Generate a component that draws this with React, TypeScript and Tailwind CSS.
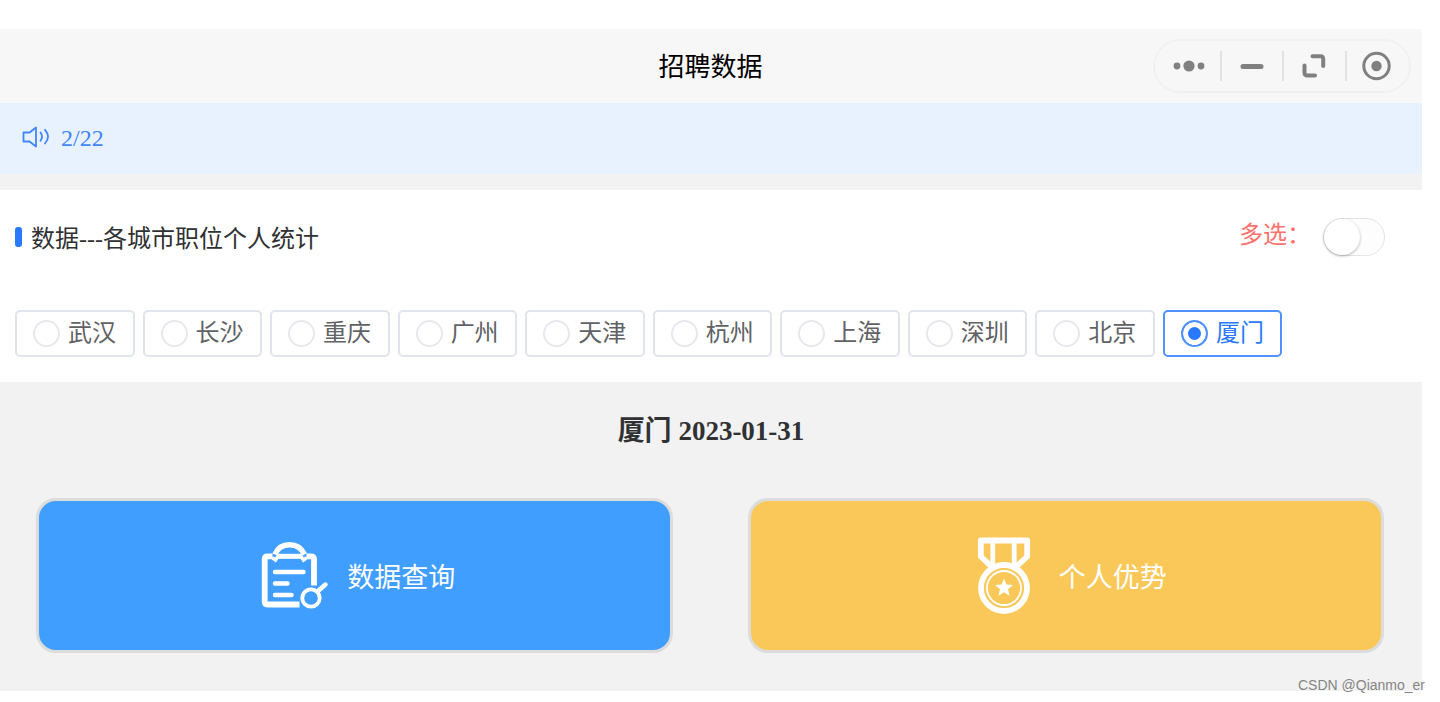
import { useState } from "react";

const cities = ["武汉", "长沙", "重庆", "广州", "天津", "杭州", "上海", "深圳", "北京", "厦门"];

function CapsuleMenu() {
  const button = "flex h-[30px] flex-1 items-center justify-center border-[#e2e2e2]";
  return (
    <div className="flex h-[54px] w-[258px] items-center rounded-full border-2 border-[#f1f1f1] pr-0.5 pl-1 text-[#808080]">
      <button type="button" aria-label="更多" className={button}>
        <svg width="32" height="12" viewBox="0 0 32 12" fill="currentColor">
          <circle cx="4" cy="6" r="3.4" />
          <circle cx="16" cy="6" r="5.6" />
          <circle cx="28" cy="6" r="3.4" />
        </svg>
      </button>
      <button type="button" aria-label="最小化" className={button + " border-l-2"}>
        <svg width="24" height="6" viewBox="0 0 24 6">
          <path d="M3 3.5H21" stroke="currentColor" strokeWidth="5" strokeLinecap="round" />
        </svg>
      </button>
      <button type="button" aria-label="全屏" className={button + " border-l-2"}>
        <svg width="24" height="24" viewBox="0 0 24 24" fill="none" stroke="currentColor" strokeWidth="4" strokeLinecap="round">
          <path d="M10.500 2.200H18.500Q21.200 2.200 21.200 5V12" />
          <path d="M2.500 11.500V18.800Q2.500 21.500 5.500 21.500H13" />
        </svg>
      </button>
      <button type="button" aria-label="关闭" className={button + " border-l-2"}>
        <svg width="30" height="30" viewBox="0 0 30 30">
          <circle cx="14.500" cy="15" r="12.700" fill="none" stroke="currentColor" strokeWidth="3" />
          <circle cx="14.500" cy="15" r="5.200" fill="currentColor" />
        </svg>
      </button>
    </div>
  );
}

function SpeakerIcon() {
  return (
    <svg width="28" height="22" viewBox="0 0 28 22" fill="none" stroke="currentColor" strokeWidth="1.800" strokeLinecap="round" strokeLinejoin="round">
      <path d="M14 1.500V20.500L7.500 15.500H1.500V6.500H7.500Z" />
      <path d="M18.500 6.500Q21.500 10.500 18.500 14.800" />
      <path d="M23 3.800Q29 10.500 23 17.500" />
    </svg>
  );
}

function ClipboardIcon() {
  return (
    <svg width="80" height="80" viewBox="0 0 80 80" fill="none" stroke="#fff" strokeLinecap="round">
      <path d="M19.500 20.300H14.500Q11.700 20.300 11.700 23V66Q11.700 68.500 14.500 68.500H46.500" strokeWidth="5.800" strokeLinecap="butt" />
      <path d="M53.500 20.300H58Q61 20.300 61 23V49.500" strokeWidth="5.800" strokeLinecap="butt" />
      <path d="M25 20.300H48" strokeWidth="5" strokeLinecap="butt" />
      <path d="M21.800 18.500C24.500 12 30 8.700 36.500 8.700S48.500 12 51.500 18.500" strokeWidth="5.400" strokeLinecap="butt" />
      <path d="M20.500 22.500L22.500 24L25 20.500M52.500 22.500L50.500 24L48 20.500" strokeWidth="3.600" />
      <path d="M22 36H50.500M22 47.500H34.500M22 59H38.500" strokeWidth="4.400" />
      <circle cx="58" cy="62" r="8.700" strokeWidth="3.800" />
      <path d="M64.500 55.500L72.500 48.500" strokeWidth="4.400" />
    </svg>
  );
}

function MedalIcon() {
  return (
    <svg width="80" height="80" viewBox="0 0 80 80" fill="none" stroke="#fff">
      <path d="M26 30L15.800 20.500V4.500H62.200V20.500L52 30" strokeWidth="5.800" strokeLinejoin="round" />
      <path d="M27.800 5V29M49.200 5V29" strokeWidth="4.800" />
      <circle cx="39" cy="52" r="23" strokeWidth="5.800" />
      <circle cx="39" cy="52" r="17" strokeWidth="1.800" />
      <path
        d="M39 42.500L41.500 48.600L48 49.100L43 53.300L44.600 59.700L39 56.200L33.400 59.700L35 53.300L30 49.100L36.500 48.600Z"
        fill="#fff"
        stroke="none"
      />
    </svg>
  );
}

export default function App() {
  const [city, setCity] = useState("厦门");
  const [multi, setMulti] = useState(false);
  const card =
    "flex h-[155px] items-center justify-center gap-[14px] rounded-[20px] border-[3px] border-[#dcdcdc] text-[27px] leading-9 text-white";

  return (
    <div className="relative bg-white pt-[29px] pr-[18px] pb-[11px] font-['Liberation_Serif','Noto_Sans_CJK_SC',serif]">
      <div className="bg-[#f2f2f2]">
        <header className="grid h-[74px] grid-cols-[1fr_auto_1fr] items-center bg-[#f7f7f7] pr-[11px]">
          <h1 className="col-start-2 pt-1 pl-[10px] text-[26px] leading-9 text-black">招聘数据</h1>
          <div className="flex justify-end">
            <CapsuleMenu />
          </div>
        </header>

        <div className="flex h-[71px] items-center gap-[11px] bg-[#e8f2ff] pb-1 pl-[22px] text-[#4285ff]">
          <SpeakerIcon />
          <span className="pt-0.5 text-2xl">2/22</span>
        </div>

        <section className="mt-4 bg-white pt-7 pr-3 pb-[25px] pl-[15px]">
          <div className="flex h-[38px] items-center justify-between pr-[25px]">
            <h2 className="flex items-center gap-[9px] text-2xl text-[#303133]">
              <span className="h-5 w-[7px] rounded-[3px] bg-[#2979ff]" />
              <span className="pt-1">数据---各城市职位个人统计</span>
            </h2>
            <div className="flex items-center gap-3">
              <label htmlFor="multi" className="pb-1 text-2xl text-[#ff6f6b]">
                多选：
              </label>
              <input
                id="multi"
                type="checkbox"
                role="switch"
                checked={multi}
                onChange={(e) => setMulti(e.target.checked)}
                className="flex h-[38px] w-[62px] cursor-pointer appearance-none items-center rounded-full border border-[#e4e4e4] bg-[#fdfdfd] before:size-9 before:shrink-0 before:rounded-full before:bg-white before:shadow-[0_1px_3px_rgba(0,0,0,0.3)] checked:justify-end checked:bg-[#2979ff]"
              />
            </div>
          </div>

          <div role="radiogroup" aria-label="城市" className="mt-[54px] grid grid-cols-11 gap-2">
            {cities.map((name) => (
              <label
                key={name}
                className="flex h-[47px] cursor-pointer items-center gap-2 rounded-[5px] border-2 border-[#e2e4eb] pl-4 text-2xl text-[#606266] has-checked:border-[#4f91ff] has-checked:text-[#2979ff]"
              >
                <input
                  type="radio"
                  name="city"
                  value={name}
                  checked={city === name}
                  onChange={() => setCity(name)}
                  className="size-[27px] shrink-0 cursor-pointer appearance-none rounded-full border-2 border-[#e6e8ed] checked:border-[#4f91ff] checked:bg-[#2979ff] checked:shadow-[inset_0_0_0_5px_#fff]"
                />
                <span className="pb-0.5 whitespace-nowrap">{name}</span>
              </label>
            ))}
          </div>
        </section>

        <section className="pt-[30px] pb-[38px]">
          <h2 className="text-center text-[27px] leading-[38px] font-bold text-[#303133]">{city} 2023-01-31</h2>
          <div className="mt-12 grid grid-cols-2 gap-[75px] pr-[38px] pl-9">
            <button type="button" className={card + " bg-[#409eff]"}>
              <ClipboardIcon />
              <span className="pt-1">数据查询</span>
            </button>
            <button type="button" className={card + " bg-[#fac858]"}>
              <MedalIcon />
              <span className="pt-1">个人优势</span>
            </button>
          </div>
        </section>
      </div>
      <p className="absolute right-[15px] bottom-[7px] font-['Liberation_Sans',sans-serif] text-sm leading-5 text-[#858585]">
        CSDN @Qianmo_er
      </p>
    </div>
  );
}
